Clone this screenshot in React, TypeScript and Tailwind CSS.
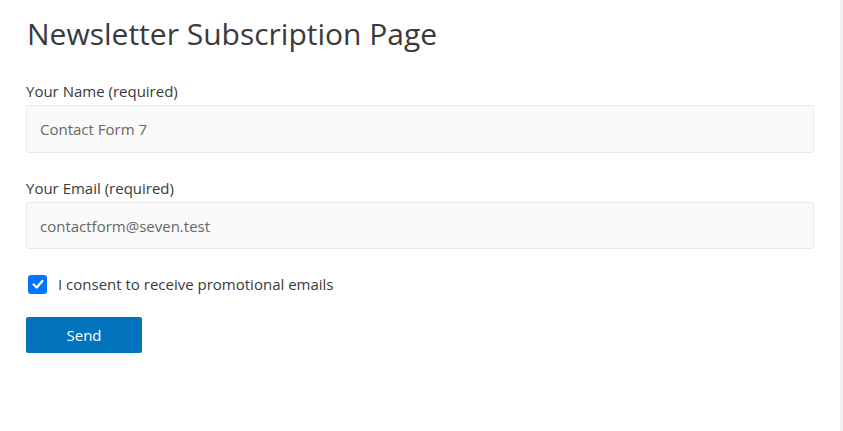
import React from "react";

export default function App() {
  return (
    <div className="flex w-[843px] h-[431px] bg-white overflow-hidden">
      <div className="flex-1 pl-[26px] pr-[26px] font-['Open_Sans',sans-serif] text-[#3a3a3a]">
        <h1 className="mt-[14px] ml-[1px] text-[30px] leading-[40px] font-normal text-[#3a3a3a]">Newsletter Subscription Page</h1>
        <form className="mt-[25px]" onSubmit={(e) => e.preventDefault()}>
          <label className="block text-[15px] leading-[24px] text-[#3a3a3a]">Your Name (required)</label>
          <input
            className="mt-[2px] block w-[788px] h-[48px] bg-[#fafafa] border border-[#eaeaea] rounded-[2px] px-[13px] text-[15px] text-[#666] outline-none"
            defaultValue="Contact Form 7"
          />
          <label className="mt-[23px] block text-[15px] leading-[24px] text-[#3a3a3a]">Your Email (required)</label>
          <input
            className="mt-[2px] block w-[788px] h-[47px] bg-[#fafafa] border border-[#eaeaea] rounded-[2px] px-[13px] text-[15px] text-[#666] outline-none"
            defaultValue="contactform@seven.test"
          />
          <label className="mt-[23px] flex items-center gap-[11px] text-[15px] leading-[24px] text-[#3a3a3a]">
            <span className="ml-[2px] flex items-center justify-center w-[19px] h-[19px] rounded-[3px] bg-[#0075ff]">
              <svg viewBox="0 0 16 16" className="w-[14px] h-[14px]" fill="none" stroke="white" strokeWidth="2.6" strokeLinecap="round" strokeLinejoin="round">
                <path d="M3 8.5 L6.5 12 L13 4.5" />
              </svg>
            </span>
            I consent to receive promotional emails
          </label>
          <button
            type="submit"
            className="mt-[21px] block w-[116px] h-[36px] rounded-[2px] bg-[#0274be] text-white text-[15px]"
          >
            Send
          </button>
        </form>
      </div>
      <div className="w-[3px] h-full bg-[#f1f1f1]" />
    </div>
  );
}
